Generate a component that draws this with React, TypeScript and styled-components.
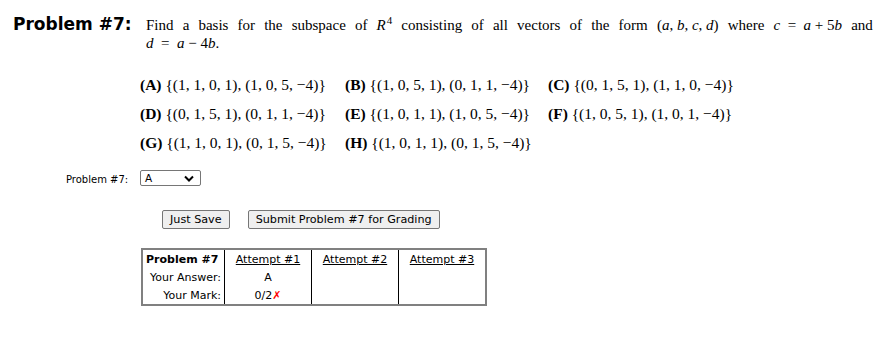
import React from "react";
import styled, { createGlobalStyle } from "styled-components";

const GlobalStyle = createGlobalStyle`
  body {
    margin: 0;
    background: #ffffff;
    color: #000000;
    font-family: "DejaVu Sans", Verdana, sans-serif;
  }
`;

const Page = styled.div`
  width: 891px;
  height: 347px;
  padding: 13px 0 0 13px;
  box-sizing: border-box;
`;

// =============================================================================
// HEADER / QUESTION
// =============================================================================
const ProblemRow = styled.div`
  display: flex;
  align-items: flex-start;
`;

const ProblemTitle = styled.h2`
  margin: 0;
  font-family: "DejaVu Sans", Verdana, sans-serif;
  font-size: 17px;
  font-weight: bold;
  line-height: 22px;
  white-space: nowrap;
  width: 133px;
`;

const Question = styled.div`
  flex: 1;
  font-family: "Liberation Serif", "Times New Roman", serif;
  font-size: 15px;
  line-height: 18px;
  padding-top: 3px;
  padding-right: 18px;
`;

const QuestionLine = styled.div<{ $justify?: boolean }>`
  display: flex;
  justify-content: ${(p) => (p.$justify ? "space-between" : "flex-start")};
  gap: 5px;
  white-space: nowrap;
`;

const MathVar = styled.i`
  font-style: italic;
`;

const Sup = styled.sup`
  font-size: 11px;
  line-height: 0;
  vertical-align: 6px;
  margin-left: 1px;
`;

const Choices = styled.div`
  display: grid;
  grid-template-columns: 205px 203px auto;
  row-gap: 9px;
  margin: 23px 0 0 127px;
  font-family: "Liberation Serif", "Times New Roman", serif;
  font-size: 15.5px;
  line-height: 20px;
  white-space: nowrap;
`;

const Choice = styled.div``;

const Letter = styled.b`
  font-weight: bold;
`;

// =============================================================================
// ANSWER ENTRY
// =============================================================================
const AnswerRow = styled.div`
  display: flex;
  align-items: center;
  margin-top: 17px;
  margin-left: 53px;
  font-size: 10px;
`;

const AnswerLabel = styled.span`
  width: 74px;
  position: relative;
  top: 1px;
`;

const SelectBox = styled.div`
  width: 49px;
  height: 14px;
  border: 1px solid #767676;
  border-radius: 2px;
  display: flex;
  align-items: center;
  justify-content: space-between;
  padding: 0 6px 0 4px;
  box-sizing: content-box;
  font-size: 10.5px;
`;

const ButtonRow = styled.div`
  display: flex;
  gap: 18px;
  margin: 24px 0 0 149px;
`;

const Button = styled.button`
  height: 19px;
  padding: 0 7px;
  font-family: "DejaVu Sans", Verdana, sans-serif;
  font-size: 11.2px;
  color: #000;
  background: #efefef;
  border: 1px solid #767676;
  border-radius: 2px;
  line-height: 16px;
`;

// =============================================================================
// RESULTS TABLE
// =============================================================================
const Results = styled.table`
  margin: 19px 0 0 128px;
  border-collapse: collapse;
  border: 2px solid #808080;
  font-size: 11px;
`;

const Cell = styled.td<{ $head?: boolean; $align?: string }>`
  border-left: 1px solid #000;
  padding: 0 4px;
  height: 18px;
  text-align: ${(p) => p.$align || "center"};
  font-weight: ${(p) => (p.$head ? "bold" : "normal")};
  vertical-align: middle;
  white-space: nowrap;
  &:first-child {
    border-left: none;
    width: 75px;
    padding: 0 3px;
  }
`;

const AttemptCell = styled(Cell)`
  width: 78px;
`;

const AttemptLink = styled.span`
  text-decoration: underline;
`;

const Cross = styled.span`
  color: #ff0000;
  font-weight: bold;
`;

const choices = [
  ["(A)", "{(1, 1, 0, 1), (1, 0, 5, −4)}"],
  ["(B)", "{(1, 0, 5, 1), (0, 1, 1, −4)}"],
  ["(C)", "{(0, 1, 5, 1), (1, 1, 0, −4)}"],
  ["(D)", "{(0, 1, 5, 1), (0, 1, 1, −4)}"],
  ["(E)", "{(1, 0, 1, 1), (1, 0, 5, −4)}"],
  ["(F)", "{(1, 0, 5, 1), (1, 0, 1, −4)}"],
  ["(G)", "{(1, 1, 0, 1), (0, 1, 5, −4)}"],
  ["(H)", "{(1, 0, 1, 1), (0, 1, 5, −4)}"],
];

export default function App() {
  return (
    <>
      <GlobalStyle />
      <Page>
        <ProblemRow>
          <ProblemTitle>Problem #7:</ProblemTitle>
          <Question>
            <QuestionLine $justify>
              <span>Find</span>
              <span>a</span>
              <span>basis</span>
              <span>for</span>
              <span>the</span>
              <span>subspace</span>
              <span>of</span>
              <span>
                <MathVar>R</MathVar>
                <Sup>4</Sup>
              </span>
              <span>consisting</span>
              <span>of</span>
              <span>all</span>
              <span>vectors</span>
              <span>of</span>
              <span>the</span>
              <span>form</span>
              <span>
                (<MathVar>a</MathVar>, <MathVar>b</MathVar>, <MathVar>c</MathVar>, <MathVar>d</MathVar>)
              </span>
              <span>where</span>
              <span>
                <MathVar>c</MathVar> &nbsp;= &nbsp;<MathVar>a</MathVar> + 5<MathVar>b</MathVar>
              </span>
              <span>and</span>
            </QuestionLine>
            <QuestionLine>
              <span>
                <MathVar>d</MathVar> &nbsp;= &nbsp;<MathVar>a</MathVar> − 4<MathVar>b</MathVar>.
              </span>
            </QuestionLine>
          </Question>
        </ProblemRow>

        <Choices>
          {choices.map(([l, v]) => (
            <Choice key={l}>
              <Letter>{l}</Letter> {v}
            </Choice>
          ))}
        </Choices>

        <AnswerRow>
          <AnswerLabel>Problem #7:</AnswerLabel>
          <SelectBox>
            <span>A</span>
            <svg width="10" height="7" viewBox="0 0 10 7">
              <path d="M1 1.5 L5 5.5 L9 1.5" fill="none" stroke="#000" strokeWidth="2" />
            </svg>
          </SelectBox>
        </AnswerRow>

        <ButtonRow>
          <Button>Just Save</Button>
          <Button>Submit Problem #7 for Grading</Button>
        </ButtonRow>

        <Results>
          <tbody>
            <tr>
              <Cell $head $align="left">Problem #7</Cell>
              <AttemptCell><AttemptLink>Attempt #1</AttemptLink></AttemptCell>
              <AttemptCell><AttemptLink>Attempt #2</AttemptLink></AttemptCell>
              <AttemptCell><AttemptLink>Attempt #3</AttemptLink></AttemptCell>
            </tr>
            <tr>
              <Cell $align="right">Your Answer:</Cell>
              <Cell>A</Cell>
              <Cell />
              <Cell />
            </tr>
            <tr>
              <Cell $align="right">Your Mark:</Cell>
              <Cell>
                0/2<Cross>✗</Cross>
              </Cell>
              <Cell />
              <Cell />
            </tr>
          </tbody>
        </Results>
      </Page>
    </>
  );
}
